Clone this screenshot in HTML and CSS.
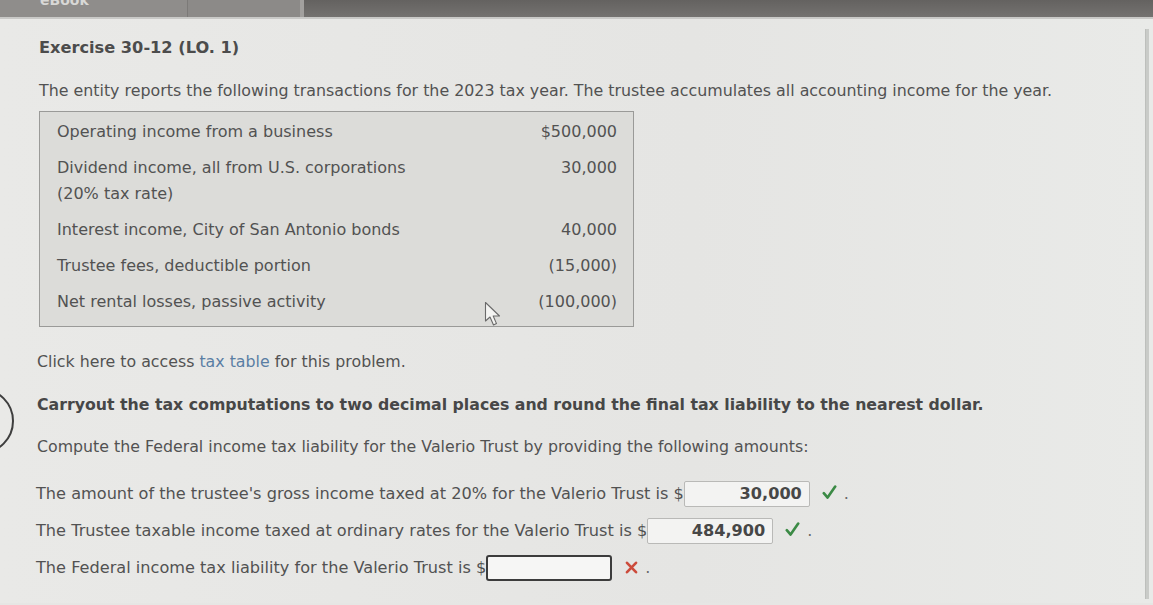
FILE: index.html
```html
<!DOCTYPE html>
<html>
<head>
<meta charset="utf-8">
<link rel="stylesheet" href="styles.css">
</head>
<body>
<div class="topbar">
  <div class="tab tab1"><span class="tabtext">eBook</span></div>
  <div class="tab tab2"></div>
  <div class="tabrest"></div>
</div>
<div class="screen">
  <div class="content">
    <h1 class="title">Exercise 30-12 (LO. 1)</h1>
    <p class="intro">The entity reports the following transactions for the 2023 tax year. The trustee accumulates all accounting income for the year.</p>
    <div class="tablewrap">
      <table class="data">
        <tr><td class="lbl">Operating income from a business</td><td class="amt">$500,000</td></tr>
        <tr><td class="lbl">Dividend income, all from U.S. corporations<br>(20% tax rate)</td><td class="amt">30,000</td></tr>
        <tr><td class="lbl">Interest income, City of San Antonio bonds</td><td class="amt">40,000</td></tr>
        <tr><td class="lbl">Trustee fees, deductible portion</td><td class="amt">(15,000)</td></tr>
        <tr><td class="lbl">Net rental losses, passive activity</td><td class="amt">(100,000)</td></tr>
      </table>
      <svg class="cursor" width="18" height="28" viewBox="0 0 18 28"><path d="M1.5 1.5 L1.5 20 L6 16 L9.5 24 L12.5 22.6 L9.2 15 L15.5 15 Z" fill="#f4f4f2" stroke="#6a6a6a" stroke-width="1.1" stroke-linejoin="round"/></svg>
    </div>
    <p class="clickhere">Click here to access <span class="link">tax table</span> for this problem.</p>
    <p class="bold">Carryout the tax computations to two decimal places and round the final tax liability to the nearest dollar.</p>
    <p class="compute">Compute the Federal income tax liability for the Valerio Trust by providing the following amounts:</p>
    <div class="answers">
      <div class="ans">The amount of the trustee's gross income taxed at 20% for the Valerio Trust is $<span class="box ok">30,000</span><svg class="mark check" width="15" height="15" viewBox="0 0 15 15"><path d="M1.8 8.2 L5.6 12.6 L13.2 1.6" fill="none" stroke="#3b8a45" stroke-width="2.6" stroke-linecap="round" stroke-linejoin="round"/></svg><span class="dot">.</span></div>
      <div class="ans">The Trustee taxable income taxed at ordinary rates for the Valerio Trust is $<span class="box ok">484,900</span><svg class="mark check" width="15" height="15" viewBox="0 0 15 15"><path d="M1.8 8.2 L5.6 12.6 L13.2 1.6" fill="none" stroke="#3b8a45" stroke-width="2.6" stroke-linecap="round" stroke-linejoin="round"/></svg><span class="dot">.</span></div>
      <div class="ans">The Federal income tax liability for the Valerio Trust is $<span class="box empty"></span><svg class="mark cross" width="13" height="13" viewBox="0 0 13 13"><path d="M2 1.8 L11 11.2 M11 1.8 L2 11.2" fill="none" stroke="#cc4b3b" stroke-width="2.6" stroke-linecap="round"/></svg><span class="dot">.</span></div>
    </div>
  </div>
  <div class="scrollbar"></div>
  <div class="ring"></div>
</div>
</body>
</html>
```
FILE: styles.css
```css
* { box-sizing: border-box; }
html, body { margin: 0; padding: 0; }
body {
  width: 1153px;
  height: 605px;
  overflow: hidden;
  background: #e6e6e4;
  font-family: "DejaVu Sans", Verdana, sans-serif;
  color: #525252;
}
.topbar {
  display: flex;
  height: 19px;
  background: #6e6c6a;
  border-bottom: 2px solid #c9c9c7;
}
.tab { height: 100%; position: relative; overflow: hidden; }
.tab1 { width: 188px; background: #8f8d8b; border-right: 1px solid #7c7a78; }
.tab2 { width: 116px; background: #8c8a88; border-right: 4px solid #a2a09e; }
.tabrest { flex: 1; background: linear-gradient(180deg, #646260, #747270); }
.tabtext {
  display: block;
  margin: -7px 0 0 40px;
  color: #d8d8d6;
  font-size: 14px;
  line-height: 14px;
  font-weight: bold;
}
.screen {
  position: relative;
  display: flex;
  height: 584px;
  background: linear-gradient(90deg, #e9e9e7 0%, #e5e5e3 60%, #e9eae8 100%);
}
.content {
  flex: 1;
  padding: 19px 0 0 39px;
}
.scrollbar {
  width: 4px;
  margin: 10px 4px 4px 0;
  background: #c9cbc8;
  border-left: 1px solid #bdbfbc;
}
.title {
  margin: 0;
  font-size: 16.2px;
  font-weight: bold;
  line-height: 19px;
  color: #4c4c4c;
}
.intro {
  margin: 24px 0 0 0;
  font-size: 15.85px;
  line-height: 19px;
}
.tablewrap {
  position: relative;
  margin-top: 11px;
  width: 595px;
  background: #dcdcd9;
  border: 1px solid #9a9a98;
  padding: 2px 0 6px 0;
}
.data { border-collapse: collapse; width: 100%; }
.data td {
  font-size: 16px;
  line-height: 26px;
  padding: 5px 0;
  vertical-align: top;
}
.lbl { padding-left: 17px !important; }
.amt { text-align: right; padding-right: 16px !important; }
.cursor { position: absolute; left: 444px; top: 189px; }
.clickhere {
  margin: 25px 0 0 -2px;
  font-size: 15.8px;
  line-height: 19px;
}
.link { color: #5a7ea4; }
.bold {
  margin: 24px 0 0 -2px;
  font-size: 15.75px;
  font-weight: bold;
  line-height: 19px;
  color: #474747;
}
.compute {
  margin: 23px 0 0 -2px;
  font-size: 15.8px;
  line-height: 19px;
}
.answers { margin: 19px 0 0 -3px; }
.ans {
  display: flex;
  align-items: center;
  height: 37px;
  font-size: 16.15px;
}
.box {
  display: inline-block;
  width: 126px;
  height: 26px;
  line-height: 24px;
  text-align: right;
  padding-right: 7px;
  font-weight: bold;
  color: #474747;
  background: #f3f3f2;
  border: 1px solid #b9b9b7;
  border-radius: 2px;
}
.box.empty {
  background: #f6f6f5;
  border: 2px solid #3c3c3c;
  border-radius: 3px;
}
.mark { display: block; }
.check { margin-left: 12px; margin-top: -2px; }
.cross { margin-left: 13px; }
.dot { margin-left: 7px; color: #6a6a6a; }
.ring {
  position: absolute;
  left: -52px;
  top: 369px;
  width: 66px;
  height: 66px;
  border: 2px solid #3e3e3e;
  border-radius: 50%;
}
```
